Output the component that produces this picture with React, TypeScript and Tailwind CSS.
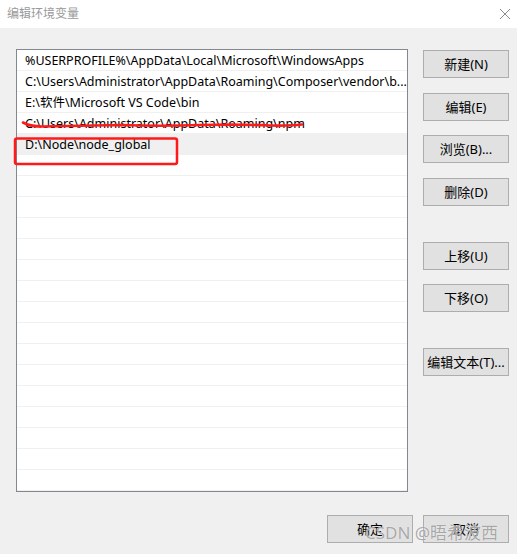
import React from 'react';

const rows = [
  '%USERPROFILE%\\AppData\\Local\\Microsoft\\WindowsApps',
  'C:\\Users\\Administrator\\AppData\\Roaming\\Composer\\vendor\\b...',
  'E:\\软件\\Microsoft VS Code\\bin',
  'C:\\Users\\Administrator\\AppData\\Roaming\\npm',
  'D:\\Node\\node_global',
];

const TOTAL_ROWS = 21;

function Btn({ label, className = '' }: { label: string; className?: string }) {
  return (
    <button
      className={`h-[28px] w-[86px] border border-[#adadad] bg-[#e1e1e1] text-[13px] text-black leading-none ${className}`}
    >
      {label}
    </button>
  );
}

export default function App() {
  const font = { fontFamily: '"Segoe UI", "Noto Sans", "Noto Sans CJK SC", sans-serif' };
  const list = Array.from({ length: TOTAL_ROWS }, (_, i) => rows[i] ?? '');

  return (
    <div className="relative w-[517px] h-[554px] bg-[#f0f0f0] overflow-hidden" style={font}>
      {/* Title bar */}
      <div className="h-[28px] bg-white flex items-center justify-between pl-[7px] pr-[5px]">
        <span className="text-[12px] text-[#9a9a9a]">编辑环境变量</span>
        <svg width="12" height="12" viewBox="0 0 12 12" className="mr-[1px]">
          <path d="M1 1 L11 11 M11 1 L1 11" stroke="#8a8a8a" strokeWidth="1" />
        </svg>
      </div>

      {/* Body */}
      <div className="flex pl-[16px] pt-[21px]">
        <div className="w-[392px] h-[443px] border border-[#828790] bg-white">
          {list.map((text, i) => (
            <div
              key={i}
              className={`h-[21px] flex items-center pl-[8px] pt-[2px] border-b border-[#f0f0f0] text-[12.5px] text-black whitespace-nowrap overflow-hidden ${
                i === 4 ? 'bg-[#f0f0f0]' : ''
              }`}
            >
              {text}
            </div>
          ))}
        </div>

        <div className="flex flex-col ml-[15px] pt-[1px]">
          <Btn label="新建(N)" />
          <Btn label="编辑(E)" className="mt-[15px]" />
          <Btn label="浏览(B)..." className="mt-[14px]" />
          <Btn label="删除(D)" className="mt-[15px]" />
          <Btn label="上移(U)" className="mt-[36px]" />
          <Btn label="下移(O)" className="mt-[14px]" />
          <Btn label="编辑文本(T)..." className="mt-[36px]" />
        </div>
      </div>

      {/* Footer */}
      <div className="flex justify-end gap-[10px] pr-[8px] mt-[23px]">
        <Btn label="确定" className="w-[85px]" />
        <Btn label="取消" />
      </div>

      {/* Annotations */}
      <svg className="absolute inset-0 pointer-events-none" width="517" height="554">
        <path
          d="M23 122.5 Q30 126.5 42 126.5 Q80 125.5 120 125 Q160 126.5 200 125 Q240 124 270 125.5 Q290 126 302 124.5"
          stroke="#ff1a1a"
          strokeWidth="2.6"
          fill="none"
          strokeLinecap="round"
        />
        <rect x="15" y="138.5" width="162" height="25.5" rx="2" stroke="#ff1a1a" strokeWidth="2.5" fill="none" />
      </svg>

      {/* Watermark */}
      <div className="absolute left-[365px] top-[524px] text-[17px] leading-none text-[#8c8c8c]/75 [text-shadow:0_0_1px_#ffffff] pointer-events-none whitespace-nowrap">
        CSDN @晤希波西
      </div>
    </div>
  );
}
